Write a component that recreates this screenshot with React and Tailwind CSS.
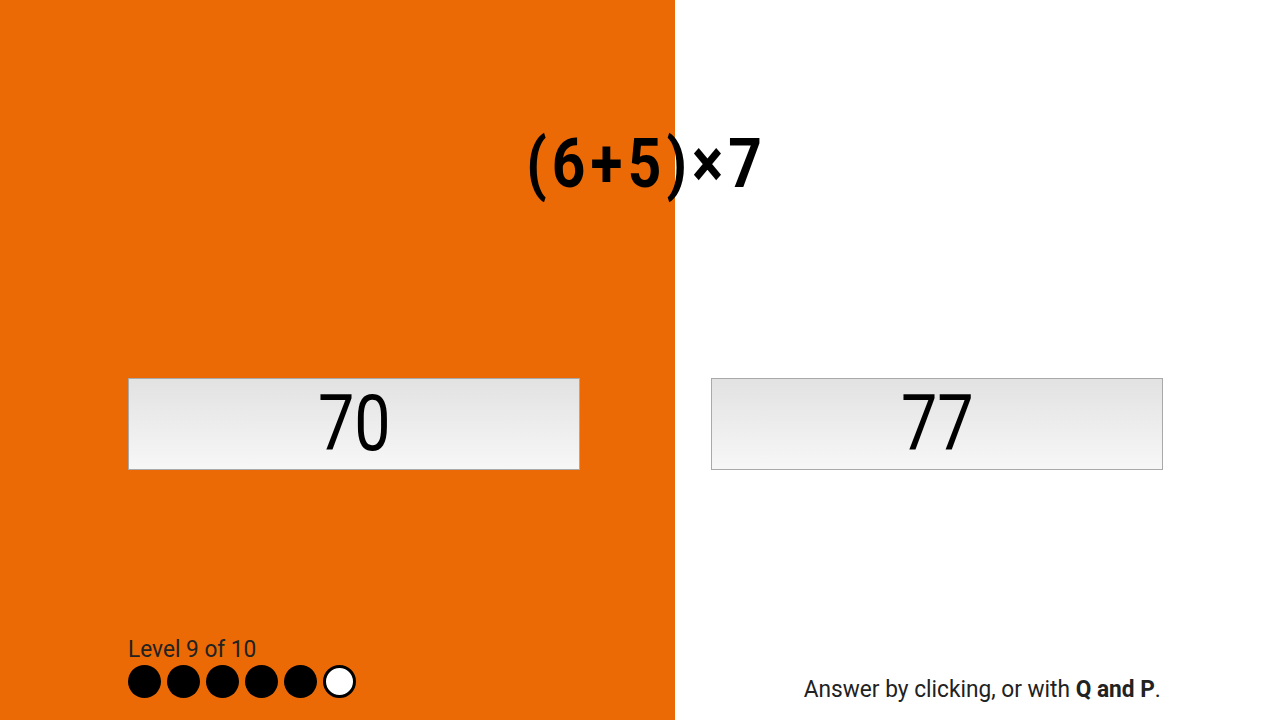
export default function App() {
  const dots = [true, true, true, true, true, false];

  return (
    <div
      className="h-[720px] w-full flex flex-col bg-[linear-gradient(to_right,#ec6a06_675px,#ffffff_675px)] text-[#111]"
      style={{ fontFamily: "Roboto, 'Liberation Sans', sans-serif" }}
    >
      <div className="flex justify-center pl-[14px] pt-[119px]">
        <h1 className="text-[69px] font-bold leading-[90px] tracking-[6px] scale-x-[0.85] text-black">
          (6+5)×7
        </h1>
      </div>

      <div className="flex gap-[131px] pl-[128px] mt-[169px]">
        <button className="w-[452px] h-[92px] border border-[#a9a9a9] bg-[linear-gradient(to_bottom,#e2e2e2,#f7f7f7)] flex items-center justify-center">
          <span className="text-[77px] leading-none text-black scale-x-[0.84]">70</span>
        </button>
        <button className="w-[452px] h-[92px] border border-[#a9a9a9] bg-[linear-gradient(to_bottom,#e2e2e2,#f7f7f7)] flex items-center justify-center">
          <span className="text-[77px] leading-none text-black scale-x-[0.84]">77</span>
        </button>
      </div>

      <div className="mt-auto flex justify-between items-end pl-[128px] pr-[119px] pb-[22px]">
        <div>
          <p className="text-[23px] leading-[26px] text-[#222] scale-x-[0.985] origin-left">Level 9 of 10</p>
          <div className="flex gap-[6px] mt-[2px]">
            {dots.map((done, i) => (
              <span
                key={i}
                className={
                  done
                    ? "w-[33px] h-[33px] rounded-full bg-black"
                    : "w-[33px] h-[33px] rounded-full bg-white border-[3px] border-black"
                }
              />
            ))}
          </div>
        </div>
        <p className="text-[24px] leading-[26px] text-[#222] -mb-[4px] scale-x-[0.945] origin-right whitespace-nowrap">
          Answer by clicking, or with <strong className="font-bold">Q and P</strong>.
        </p>
      </div>
    </div>
  );
}
